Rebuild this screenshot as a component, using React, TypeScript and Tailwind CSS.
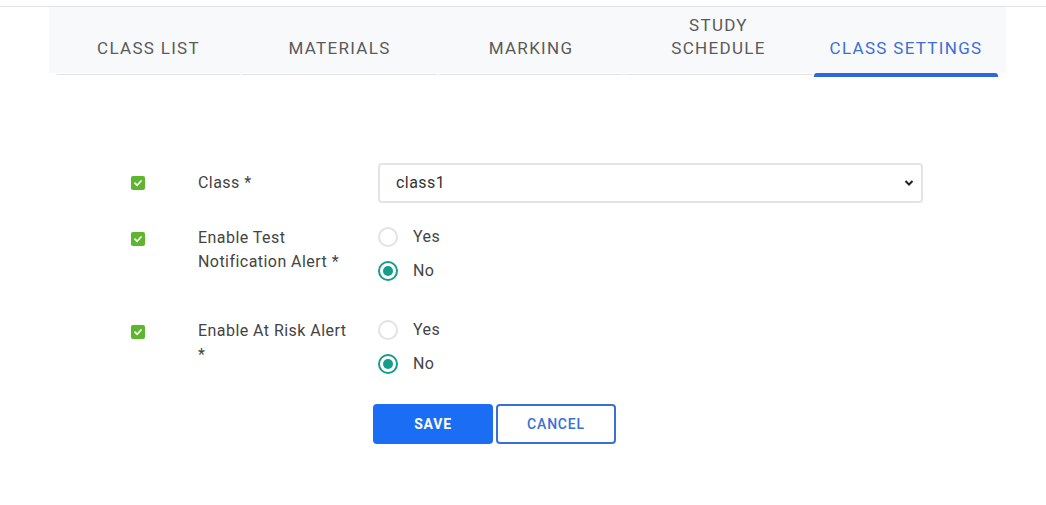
import React from "react";

const tabs = [
  { label: "CLASS LIST", w: "w-[183px]" },
  { label: "MATERIALS", w: "w-[195px]" },
  { label: "MARKING", w: "w-[184px]" },
  { label: "STUDY SCHEDULE", w: "w-[187px]", two: true },
  { label: "CLASS SETTINGS", w: "w-[184px]", active: true },
];

function Check() {
  return (
    <div className="w-[14px] h-[14px] rounded-[2px] bg-[#5db62e] flex items-center justify-center">
      <svg width="10" height="10" viewBox="0 0 10 10">
        <path d="M2 5.2 L4.2 7.3 L8 3" stroke="white" strokeWidth="1.7" fill="none" strokeLinecap="round" strokeLinejoin="round" />
      </svg>
    </div>
  );
}

function Radio({ checked, label }: { checked?: boolean; label: string }) {
  return (
    <div className="flex items-center h-[34px]">
      {checked ? (
        <div className="w-[20px] h-[20px] rounded-full border-2 border-[#169c8c] flex items-center justify-center">
          <div className="w-[10px] h-[10px] rounded-full bg-[#169c8c]" />
        </div>
      ) : (
        <div className="w-[20px] h-[20px] rounded-full border-2 border-[#e2e2e2]" />
      )}
      <span className="ml-[15px] text-[16px] text-[#444] tracking-[0.4px]">{label}</span>
    </div>
  );
}

export default function App() {
  return (
    <div className="w-[1046px] h-[505px] bg-white overflow-hidden font-['Roboto',sans-serif]">
      <div className="h-[6px]" />
      <div className="border-t border-[#e3e3e3]">
        <div className="ml-[49px] w-[957px] pl-[8px] flex gap-[2px] bg-[linear-gradient(to_bottom,#f8f9fa_66px,transparent_66px)]">
          {tabs.map((t) => (
            <div key={t.label} className={`${t.w} flex flex-col`}>
              <div
                className={`h-[66px] flex flex-col justify-end items-center pb-[13px] text-center text-[17px] leading-[23px] tracking-[1.3px] ${
                  t.active ? "text-[#3d6fd4]" : "text-[#5a5a5a]"
                }`}
              >
                {t.two ? (
                  <>
                    <span>STUDY</span>
                    <span>SCHEDULE</span>
                  </>
                ) : (
                  <span>{t.label}</span>
                )}
              </div>
              {t.active ? (
                <div className="h-[4px] bg-[#2f69d6] rounded-t-[3px]" />
              ) : (
                <div className="mt-px h-px bg-[#e2e2e2]" />
              )}
            </div>
          ))}
        </div>
      </div>

      <div className="ml-[131px] mt-[86px] text-[16px] text-[#444] tracking-[0.45px]">
        <div className="flex items-center h-[40px]">
          <div className="w-[67px]">
            <Check />
          </div>
          <div className="w-[180px]">Class *</div>
          <div className="relative w-[545px] h-[40px]">
            <select className="appearance-none w-full h-full border-2 border-[#e4e4e4] rounded-[4px] pl-[16px] text-[16px] text-[#333] bg-white outline-none">
              <option>class1</option>
            </select>
            <svg className="absolute right-[9px] top-[16px] pointer-events-none" width="10" height="8" viewBox="0 0 10 8">
              <path d="M1.5 2 L5 5.5 L8.5 2" stroke="#222" strokeWidth="2" fill="none" />
            </svg>
          </div>
        </div>

        <div className="flex items-start mt-[17px]">
          <div className="w-[67px] pt-[12px]">
            <Check />
          </div>
          <div className="w-[180px] pt-[6px] leading-[24px]">
            Enable Test
            <br />
            Notification Alert *
          </div>
          <div className="flex flex-col">
            <Radio label="Yes" />
            <Radio label="No" checked />
          </div>
        </div>

        <div className="flex items-start mt-[25px]">
          <div className="w-[67px] pt-[12px]">
            <Check />
          </div>
          <div className="w-[180px] pt-[6px] leading-[24px]">
            Enable At Risk Alert
            <br />*
          </div>
          <div className="flex flex-col">
            <Radio label="Yes" />
            <Radio label="No" checked />
          </div>
        </div>

        <div className="flex mt-[23px] ml-[242px] gap-[3px]">
          <button className="w-[120px] h-[40px] rounded-[4px] bg-[#1b6ef3] text-white text-[14px] font-bold tracking-[0.8px]">
            SAVE
          </button>
          <button className="w-[120px] h-[40px] rounded-[4px] border-2 border-[#3a6fd8] bg-white text-[#3a6fd8] text-[14px] font-medium tracking-[0.8px]">
            CANCEL
          </button>
        </div>
      </div>
    </div>
  );
}
